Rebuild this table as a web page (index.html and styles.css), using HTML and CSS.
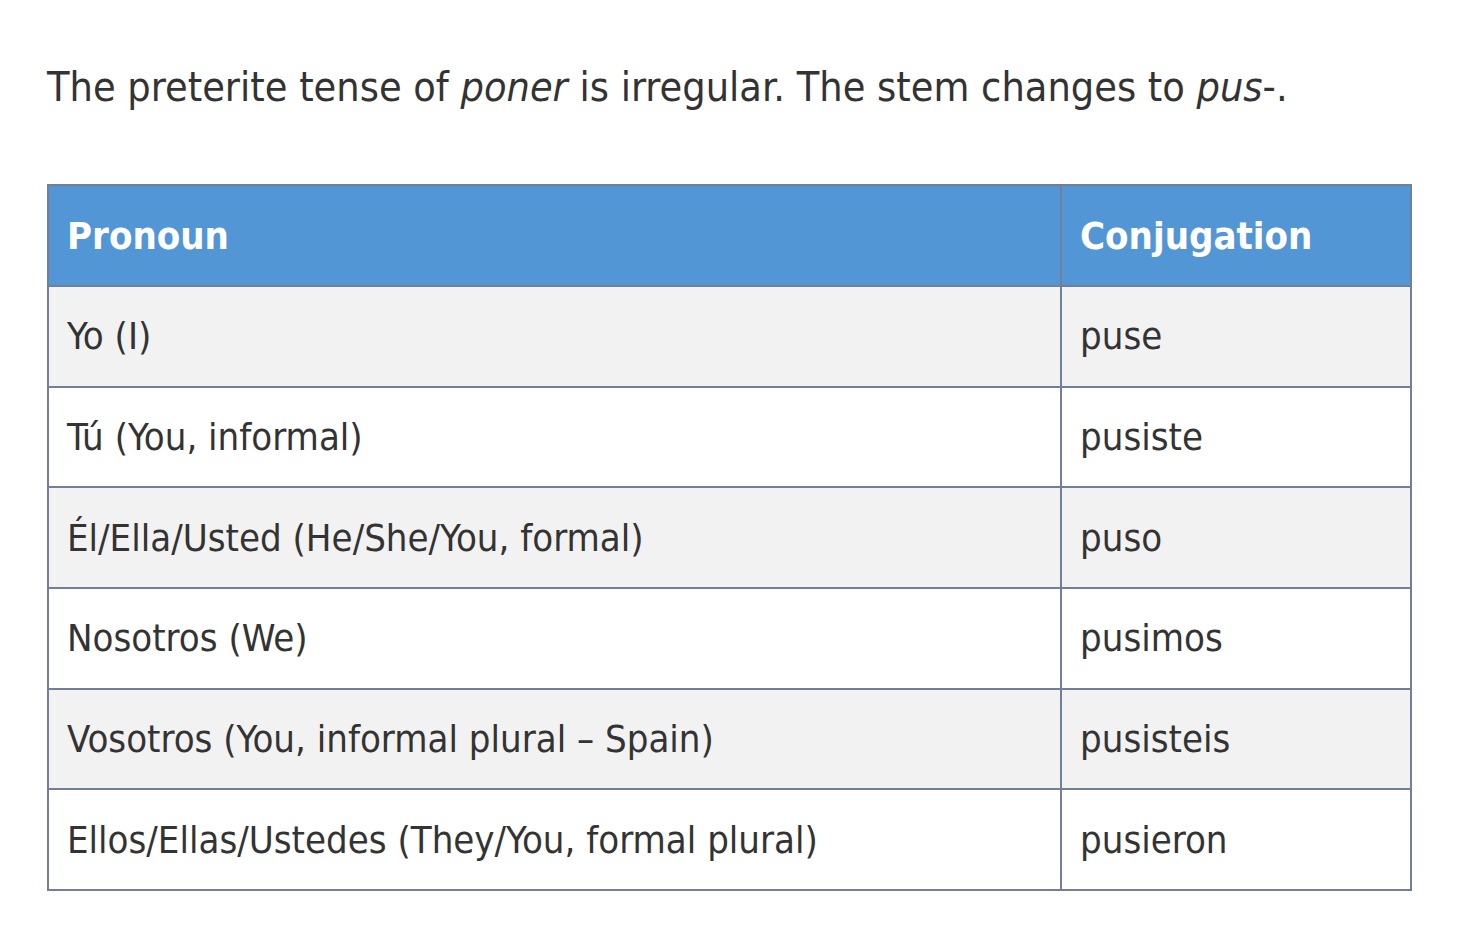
FILE: index.html
```html
<!DOCTYPE html>
<html>
<head>
<meta charset="utf-8">
<link rel="stylesheet" href="styles.css">
</head>
<body>
<p class="intro">The preterite tense of <em>poner</em> is irregular. The stem changes to <em>pus</em>-.</p>
<table class="conj">
<thead>
<tr><th class="c1">Pronoun</th><th class="c2">Conjugation</th></tr>
</thead>
<tbody>
<tr><td>Yo (I)</td><td>puse</td></tr>
<tr><td>Tú (You, informal)</td><td>pusiste</td></tr>
<tr><td>Él/Ella/Usted (He/She/You, formal)</td><td>puso</td></tr>
<tr><td>Nosotros (We)</td><td>pusimos</td></tr>
<tr><td>Vosotros (You, informal plural – Spain)</td><td>pusisteis</td></tr>
<tr><td>Ellos/Ellas/Ustedes (They/You, formal plural)</td><td>pusieron</td></tr>
</tbody>
</table>
</body>
</html>
```
FILE: styles.css
```css
html, body {
  margin: 0;
  padding: 0;
  background: #ffffff;
}
body {
  padding: 0 52px 0 47px;
  font-family: "DejaVu Sans Condensed", "DejaVu Sans", Verdana, sans-serif;
  color: #333333;
}
.intro {
  margin: 0;
  padding-top: 58px;
  font-size: 41px;
  line-height: 58px;
  height: 126px;
}
.conj {
  width: 1365px;
  border-collapse: collapse;
  border: 2px solid #717f98;
  font-size: 38px;
}
.conj th, .conj td {
  border: 2px solid #717f98;
  height: 98.7px;
  padding: 0 18px;
  text-align: left;
  vertical-align: middle;
}
.conj th {
  height: 99px;
  background: #5296d5;
  color: #ffffff;
  font-weight: bold;
}
.conj .c1 { width: 975px; }
.conj tbody tr:nth-child(odd) td { background: #f2f2f2; }
.conj tbody tr:nth-child(even) td { background: #ffffff; }
```
